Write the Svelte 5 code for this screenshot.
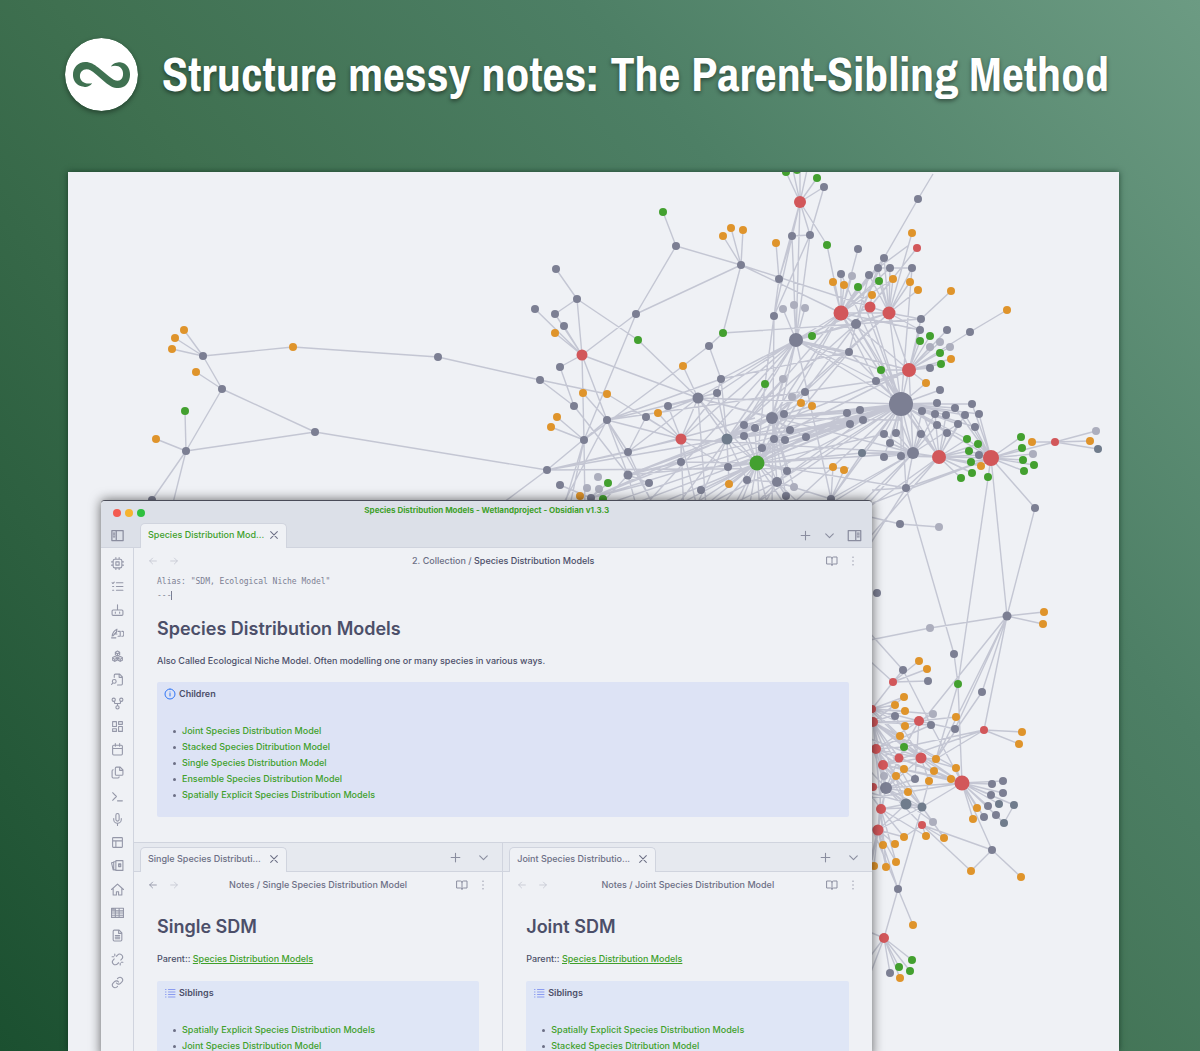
<script>
  const colors = {
    slate: '#7c7f93',
    teal: '#707c8c',
    grey: '#acaebd',
    orange: '#df942b',
    green: '#43a02f',
    red: '#d2575a'
  };

  // Graph nodes: x y [radius], grouped by colour.
  const nodeData = {
    grey: '783 309,794 305,805 308,852 276,930 347,940 342,950 347,598 477,587 488,599 489,783 379,792 397,794 487,1033 454,1096 431,939 527,930 628,933 714,884 776,933 822',
    slate:
      '203 356,222 389,186 451,315 432,438 357,152 500,824 187,741 265,792 236,810 235,779 279,774 316,796 340 7,858 249,841 274,869 275,878 268,884 258,890 268,912 268,856 324 5,918 199,921 319,920 330,947 330,970 332,930 368,676 246,556 269,577 299,535 309,555 314,564 326,636 314,560 367,540 380,574 406,698 398 5.5,709 346,668 406,646 417,607 420,584 440,628 452,547 470,560 485,591 498,628 475 4.5,649 483,681 462,701 490,721 379,717 393,849 352,876 381,805 392,772 418 6,784 414,744 425,755 428,744 436,774 439,785 440,790 430,806 437,762 448,728 467,747 480,777 482 5,787 471,786 496,831 499,847 413,860 410,850 424,863 420,884 434,896 433,890 443,884 457,901 456,906 488,901 404 12,913 453 6,940 390,937 403,955 408,972 404,979 414,922 411,935 414,946 415,965 415,958 424,975 427,937 425,921 434,947 433,979 455,1035 508,900 524,877 593,1007 616 4.5,954 654,982 692,903 670,928 681,895 716,931 725,955 729,915 779,886 788 6,992 784,1003 781,991 795,1003 793,988 806,984 817,996 815,992 850,898 889,890 973',
    teal: '727 439 5.5,862 453,1098 449,906 804 5.5,922 807 4.5,999 804,1014 805,1004 823',
    orange:
      '184 330,175 338,172 349,196 372,293 347,156 439,723 236,731 228,743 230,776 243,833 282,844 285,893 279,872 295,910 282,918 290,912 233,951 291,1007 310,951 359,555 333,583 393,607 394,683 366,658 413,557 417,551 427,580 496,801 403,812 406,729 484,833 467,844 470,926 383,981 466,1032 442,1090 441,1044 612,1043 624,919 661,927 669,904 697,895 705,905 711,905 726,900 736,956 717,1022 732,1019 744,936 759,934 771,904 769,956 768,896 776,929 781,951 779,908 792,977 808,973 819,904 837,926 836,944 838,883 845,895 844,896 862,886 867,874 866,971 871,1021 877,913 925,900 978',
    green:
      '185 411,786 172,797 170,817 178,827 245,723 333,812 336,858 287,879 281,930 336,920 341,940 353,941 364,881 370,663 212,638 340,765 384,757 463 7.5,608 483,603 499,967 439,978 444,969 451,971 462,961 478,972 473,988 477,1021 437,1022 448,1023 460,1034 465,1024 471,958 684,904 747,912 960,899 967,910 971',
    red: '800 202 6,841 313 7.5,870 307 5.5,889 313 6.5,917 248,909 370 7,582 355 5.5,681 439 5.5,939 457 7,991 458 8,1055 442,893 682,919 721 5,984 730,872 709,873 722 5,876 749 5,883 765 5,899 758 4.5,921 758 5.5,873 787,962 783 7.5,881 809 5,878 830 5.5,922 825,884 938 5'
  };

  // Links: every entry joins its first point to each of the others.
  const linkData = [
    '203 356,184 330,175 338,172 349,222 389,293 347',
    '222 389,196 372,186 451,315 432',
    '186 451,185 411,156 439,152 500,315 432,170 515',
    '438 357,293 347,540 380',
    '547 470,315 432,500 505,607 420,628 452,681 439,727 439,849 468',
    '540 380,574 406,607 394',
    '676 246,663 212,636 314,741 265',
    '741 265,723 236,731 228,743 230,636 314,723 333,841 313,889 313',
    '577 299,556 269,555 314,582 355,638 340',
    '582 355,535 309,555 314,564 326,555 333,560 367,636 314,584 440,607 420,698 398',
    '636 314,584 440',
    '574 406,560 367,540 380,628 475',
    '607 420,583 393,584 440,628 475,681 439,717 393,876 381,560 510,721 379,700 590',
    '584 440,557 417,551 427,585 510,560 520,569 510,683 366',
    '628 452,646 417,607 420,755 418,660 520',
    '628 475,649 483,600 505,727 439,640 520,757 463,681 462',
    '698 398,668 406,683 366,638 340,660 413,681 439,772 418,901 404,628 452,707 520,727 439,913 453',
    '681 439,658 413,668 406,646 417,607 394,681 462,717 393,727 467,700 520,684 520,913 453,796 340',
    '721 379,709 346,717 393,727 439,796 340,849 352',
    '709 346,723 333,683 366',
    '723 333,856 324',
    '800 202,786 172,793 170,800 170,807 170,817 178,824 187,792 236,810 235,827 245,779 279,774 316,796 340',
    '810 235,824 187,792 236,796 340,774 316',
    '792 236,796 340,779 279',
    '779 279,776 243,774 316,765 384',
    '774 316,765 384,772 510',
    '765 384,757 463,727 439',
    '827 245,841 313',
    '796 340,783 309,794 305,805 308,812 336,841 313,856 324,889 313,870 307,901 404,727 439,757 463,772 418,849 352,876 381,881 370,717 393,744 425,774 439,698 398,721 379,831 499,650 500,909 370',
    '841 313,858 249,841 274,852 276,833 282,844 285,858 287,869 275,878 268,884 258,890 268,893 279,879 281,901 404,889 313,812 336,856 324,772 418,744 425,757 463,909 370,876 381,920 330',
    '884 258,918 199,856 324',
    '918 199,933 174',
    '878 268,912 268,856 324,909 245',
    '870 307,872 295,893 279,917 248,901 404',
    '889 313,869 275,878 268,890 268,884 258,879 281,893 279,910 282,918 290,912 268,912 233,901 404,921 319,856 324,909 370,772 418,805 392,920 330',
    '856 324,869 275,849 352,921 319,901 404,727 439,805 392,939 457',
    '921 319,951 291,909 370',
    '970 332,1007 310,909 370',
    '909 370,920 330,920 341,930 336,947 330,930 347,940 342,950 347,940 353,951 359,941 364,930 368,901 404,876 381,881 370,926 383,744 436,790 430,913 453',
    '901 404,926 383,940 390,937 403,955 408,972 404,979 414,922 411,935 414,946 415,965 415,958 424,975 427,937 425,921 434,947 433,884 434,896 433,890 443,884 457,913 453,901 456,939 457,991 458,847 413,860 410,850 424,863 420,876 381,881 370,849 352,862 453,757 463,772 418,785 440,806 437,777 482,728 467,628 475,906 488,560 520,640 540,590 520,831 499,841 274,858 287,912 268,967 439,717 530,786 510,774 439',
    '913 453,884 434,896 433,890 443,884 457,901 456,862 453,921 434,937 425,906 488,939 457,922 411,935 414,757 463,844 520,820 510,845 530,881 370,958 424',
    '939 457,979 455,967 439,978 444,969 451,971 462,961 478,972 473,981 466,922 411,935 414,946 415,947 433,921 434,901 456,872 505,862 453,850 560,958 424,965 415,906 488',
    '991 458,967 439,978 444,969 451,971 462,979 455,981 466,988 477,1021 437,1022 448,1023 460,1034 465,1024 471,1033 454,972 404,979 414,965 415,975 427,955 408,1035 508,958 684,1007 616,1055 442,901 456,906 488,937 425,828 520',
    '1055 442,1032 442,1096 431,1090 441,1098 449',
    '1035 508,991 458,1007 616',
    '900 524,939 527,862 515',
    '906 488,954 654,860 560,872 490',
    '757 463,744 436,744 425,755 428,762 448,774 439,785 440,790 430,784 414,772 418,806 437,787 471,777 482,747 480,728 467,729 484,701 490,681 462,700 510,714 515,724 525,736 515,747 520,760 515,770 515,785 505,806 510,727 439,862 453,698 398,906 488,849 352,805 392,620 520,650 520,670 520,847 413,860 410,850 424,863 420,884 434',
    '772 418,784 414,744 425,755 428,783 379,805 392,774 439,785 440,790 430,806 437,801 403,812 406,777 482,787 471,762 448,847 413,860 410,900 420,727 439,786 496,628 475,794 487',
    '727 439,744 425,755 428,744 436,717 393,728 467,729 484,747 480,850 424,863 420,690 520,670 515,901 404,805 392,783 379',
    '777 482,787 471,786 496,831 499,747 480,762 448,740 520,794 487,755 520,700 520,862 420',
    '831 499,833 467,844 470,901 404,862 453,913 453',
    '591 498,608 483,599 489,560 485,649 483,681 462,900 404,772 418',
    '1007 616,1044 612,1043 624,930 628,982 692,984 730,925 718,955 729,936 759',
    '930 628,860 642',
    '954 654,958 684',
    '958 684,962 783,936 759',
    '982 692,936 759',
    '903 670,860 622,893 682,931 725',
    '893 682,919 661,927 669,928 681,872 709,860 652',
    '872 709,893 682,895 716,904 697,895 705,905 711,905 726,900 736,919 721,933 714',
    '919 721,956 717,955 729,904 747,873 722,876 749,899 758,933 714,915 779',
    '984 730,1022 732,1019 744,904 747,936 759,883 765',
    '873 722,904 697,905 711,895 705,931 725,904 747,899 758,883 765,921 758,936 759,956 768,886 788,906 804,900 736,962 783,922 807',
    '876 749,904 747,899 758,921 758,904 769,896 776,934 771,886 788,922 807,915 779,962 783,881 809,931 725,951 779',
    '883 765,899 758,921 758,896 776,904 769,886 788,908 792,906 804,878 830,951 779,962 783',
    '921 758,936 759,934 771,929 781,956 768,904 747,873 722,886 788,962 783,860 700,860 735,895 716',
    '886 788,896 776,904 769,915 779,908 792,906 804,881 809,873 787,962 783,922 807,860 710,860 760,899 758,904 747,933 822,878 830,922 825',
    '962 783,992 784,1003 781,991 795,1003 793,988 806,999 804,1014 805,984 817,996 815,1004 823,977 808,973 819,992 850,958 684,956 768,951 779,922 807,931 725,934 771,860 800',
    '1014 805,1004 823',
    '922 807,908 792,929 781,906 804,898 889,878 830,860 790,886 788,933 822,944 838',
    '881 809,873 722,906 804,922 807,904 837,926 836,883 845,886 867,896 862,860 780,876 749',
    '878 830,883 845,895 844,904 837,886 867,896 862,874 866,898 889,906 804,860 900,881 809,872 860',
    '922 825,904 837,926 836,944 838,992 850,971 871,886 788',
    '992 850,971 871,1021 877',
    '898 889,913 925,884 938,860 800',
    '884 938,912 960,899 967,910 971,890 973,900 978,860 928,860 970,866 985'
  ];

  const points = (s) => s.split(',').map((p) => p.split(' ').map(Number));

  const nodes = Object.entries(nodeData).flatMap(([kind, s]) =>
    points(s).map(([x, y, r = 4]) => ({ x, y, r, fill: colors[kind] }))
  );
  const links = linkData
    .map((s) => {
      const [hub, ...ends] = points(s);
      return ends.map((e) => `M${hub[0]} ${hub[1]}L${e[0]} ${e[1]}`).join('');
    })
    .join('');

  // 24-unit outline icons.
  const icon = {
    panelLeft: 'M3 4h18v16H3zM10 4v16M5.500 8h2M5.500 11h2M5.500 14h2',
    panelRight: 'M2 4h20v16H2zM14 4v16M16.500 8h3M16.500 11h3M16.500 14h3',
    plus: 'M12 4v16M4 12h16',
    down: 'M5 9l7 7 7-7',
    close: 'M4 4l16 16M20 4L4 20',
    back: 'M20 12H4M11 5l-7 7 7 7',
    forward: 'M4 12h16M13 5l7 7-7 7',
    book: 'M12 6v14M2 4h7a3 3 0 0 1 3 3 3 3 0 0 1 3-3h7v14h-7a3 3 0 0 0-3 3 3 3 0 0 0-3-3H2z',
    dots: 'M12 4v1M12 11.500v1M12 19v1',
    info: 'M12 2a10 10 0 1 0 0 20 10 10 0 1 0 0-20M12 16v-5M12 8v.1',
    list: 'M9 5h13M9 10h13M9 15h13M9 20h13M3 5h1M3 10h1M3 15h1M3 20h1'
  };

  const ribbon = [
    { name: 'Processor', d: 'M7 4h10a3 3 0 0 1 3 3v10a3 3 0 0 1-3 3H7a3 3 0 0 1-3-3V7a3 3 0 0 1 3-3zM9 9h6v6H9zM9 1v3M15 1v3M9 20v3M15 20v3M1 9h3M1 15h3M20 9h3M20 15h3' },
    { name: 'Task list', d: 'M10 5h12M10 12h12M10 19h12M2 5l1.500 1.500L6 4M3 12h2M3 19h2' },
    { name: 'Assistant', d: 'M4 11h16a2 2 0 0 1 2 2v6a2 2 0 0 1-2 2H4a2 2 0 0 1-2-2v-6a2 2 0 0 1 2-2zM12 11V4M12 1.500v3M8 15v2M16 15v2' },
    { name: 'Handwriting', d: 'M1 20h8M2 17C3 10 6 6 11 4l-1 6-6 6M4 16l5-6M13 8h4v9h-4M20 8h2c2 0 2 9 0 9h-2M6 13h5' },
    { name: 'Blocks', d: 'M12 2l4 2v5l-4 2-4-2V4zM7 12l4 2v5l-4 2-4-2v-5zM17 12l4 2v5l-4 2-4-2v-5zM8 5l4 2 4-2M12 7v4M3 15l4 2 4-2M7 17v4M13 15l4 2 4-2M17 17v4' },
    { name: 'File search', d: 'M6 8V4a2 2 0 0 1 2-2h8l5 5v13a2 2 0 0 1-2 2h-7M15 2v6h6M6 12a3.500 3.500 0 1 0 0 7 3.500 3.500 0 1 0 0-7M3 19l-2 2' },
    { name: 'Graph', d: 'M5 2a3 3 0 1 0 0 6 3 3 0 1 0 0-6M19 2a3 3 0 1 0 0 6 3 3 0 1 0 0-6M12 16a3 3 0 1 0 0 6 3 3 0 1 0 0-6M6 8l1 4h10l1-4M12 12v4' },
    { name: 'Canvas', d: 'M3 3h7v9H3zM14 3h7v5h-7zM14 12h7v9h-7zM3 16h7v5H3z' },
    { name: 'Calendar', d: 'M5 4h14a2 2 0 0 1 2 2v14a2 2 0 0 1-2 2H5a2 2 0 0 1-2-2V6a2 2 0 0 1 2-2zM3 10h18M8 1v5M16 1v5' },
    { name: 'Copies', d: 'M10 2h7l5 5v8a2 2 0 0 1-2 2H10a2 2 0 0 1-2-2V4a2 2 0 0 1 2-2zM16 2v6h6M4 7a2 2 0 0 0-2 2v11a2 2 0 0 0 2 2h9a2 2 0 0 0 2-2' },
    { name: 'Terminal', d: 'M3 5l7 7-7 7M12 20h9' },
    { name: 'Record', d: 'M12 1a3 3 0 0 1 3 3v8a3 3 0 0 1-6 0V4a3 3 0 0 1 3-3zM5 10v2a7 7 0 0 0 14 0v-2M12 19v4' },
    { name: 'Layout', d: 'M4 3h16a1 1 0 0 1 1 1v16a1 1 0 0 1-1 1H4a1 1 0 0 1-1-1V4a1 1 0 0 1 1-1zM3 9h18M9 9v12' },
    { name: 'Cards', d: 'M9 3h13v18H9zM9 5H5v15h4M5 6L1 7l3 13M14 9h4v5h-4zM15 11h2' },
    { name: 'Home', d: 'M1 12L12 2l11 10M4 10v12h6v-6h4v6h6V10' },
    { name: 'Table', d: 'M1 4h22v17H1zM1 9h22M1 13h22M1 17h22M8 4v17M15 4v17M2 6h4' },
    { name: 'Document', d: 'M6 2h9l5 5v13a2 2 0 0 1-2 2H6a2 2 0 0 1-2-2V4a2 2 0 0 1 2-2zM14 2v6h6M8 12h8M8 15h8M8 18h8' },
    { name: 'Unlink', d: 'M10 6l2-2a5 5 0 0 1 8 7l-2 2M14 18l-2 2a5 5 0 0 1-8-7l2-2M7 2v3M2 7h3M17 19v3M19 17h3' },
    { name: 'Link', d: 'M10 13a5 5 0 0 0 7.500.500l3-3a5 5 0 0 0-7-7L12 5M14 11a5 5 0 0 0-7.500-.500l-3 3a5 5 0 0 0 7 7L12 19' }
  ];

  const children = [
    'Joint Species Distribution Model',
    'Stacked Species Ditribution Model',
    'Single Species Distribution Model',
    'Ensemble Species Distribution Model',
    'Spatially Explicit Species Distribution Models'
  ];

  const notes = [
    {
      tab: 'Single Species Distributi...',
      path: 'Notes / Single Species Distribution Model',
      title: 'Single SDM',
      canGoBack: true,
      siblings: ['Spatially Explicit Species Distribution Models', 'Joint Species Distribution Model']
    },
    {
      tab: 'Joint Species Distributio...',
      path: 'Notes / Joint Species Distribution Model',
      title: 'Joint SDM',
      canGoBack: false,
      siblings: ['Spatially Explicit Species Distribution Models', 'Stacked Species Ditribution Model']
    }
  ];
</script>

{#snippet glyph(d)}
  <svg class="glyph" viewBox="0 0 24 24" aria-hidden="true"><path {d} /></svg>
{/snippet}

{#snippet tab(label)}
  <div class="tab">
    <button class="tab-name">{label}</button>
    <button class="tab-close" aria-label="Close tab">{@render glyph(icon.close)}</button>
  </div>
{/snippet}

{#snippet viewTools(canGoBack)}
  <div class="nav">
    <button class:dim={!canGoBack} aria-label="Back">{@render glyph(icon.back)}</button>
    <button class="dim" aria-label="Forward">{@render glyph(icon.forward)}</button>
  </div>
{/snippet}

{#snippet viewActions()}
  <div class="nav actions">
    <button aria-label="Reading view">{@render glyph(icon.book)}</button>
    <button aria-label="More options">{@render glyph(icon.dots)}</button>
  </div>
{/snippet}

{#snippet linkList(items)}
  <ul class="links">
    {#each items as item}
      <li><a href="#note">{item}</a></li>
    {/each}
  </ul>
{/snippet}

<main class="page">
  <header class="hero">
    <svg class="logo" viewBox="75 51 220 220" aria-hidden="true">
      <circle cx="185" cy="161" r="110" fill="#fff" />
      <path
        fill="#3f7151"
        d="M213 137C222 126 231 124 241 124C260 126 271 142 271 161C271 185 256 202 236 202C220 202 208 194 196 184L168 160C156 150 149 145 140 145C128 145 120 154 120 166C120 180 134 192 157 187C150 196 140 200 132 198C110 196 99 180 99 162C99 140 114 123 136 123C152 123 163 130 175 140L208 167C218 175 226 180 234 180C244 180 250 171 250 159C250 142 236 130 213 137Z"
      />
    </svg>
    <h1>Structure messy notes: The Parent-Sibling Method</h1>
  </header>

  <section class="board">
    <svg class="graph" viewBox="68 172 1051 879" aria-hidden="true">
      <path class="edges" d={links} />
      {#each nodes as n}
        <circle cx={n.x} cy={n.y} r={n.r} fill={n.fill} />
      {/each}
    </svg>

    <div class="window">
      <div class="chrome">
        <div class="titlebar">
          <div class="lights"><i class="stop"></i><i class="min"></i><i class="max"></i></div>
          <span>Species Distribution Models - Wetlandproject - Obsidian v1.3.3</span>
        </div>
        <div class="tabbar">
          <button class="corner" aria-label="Toggle left sidebar">{@render glyph(icon.panelLeft)}</button>
          {@render tab('Species Distribution Mod...')}
          <div class="tab-tools">
            <button aria-label="New tab">{@render glyph(icon.plus)}</button>
            <button aria-label="Tab list">{@render glyph(icon.down)}</button>
            <button aria-label="Toggle right sidebar">{@render glyph(icon.panelRight)}</button>
          </div>
        </div>
      </div>

      <div class="body">
        <nav class="ribbon">
          {#each ribbon as r}
            <button aria-label={r.name}>{@render glyph(r.d)}</button>
          {/each}
        </nav>

        <div class="workspace">
          <article class="top-pane">
            <div class="view-head">
              {@render viewTools(false)}
              <p>2. Collection / <b>Species Distribution Models</b></p>
              {@render viewActions()}
            </div>
            <div class="note">
              <pre class="meta">Alias: "SDM, Ecological Niche Model"
<span class="caret">---</span></pre>
              <h2>Species Distribution Models</h2>
              <p class="text">Also Called Ecological Niche Model. Often modelling one or many species in various ways.</p>
              <div class="callout">
                <h3 class="info">{@render glyph(icon.info)}Children</h3>
                {@render linkList(children)}
              </div>
            </div>
          </article>

          <div class="split">
            {#each notes as note}
              <article class="pane">
                <div class="tabbar">
                  {@render tab(note.tab)}
                  <div class="tab-tools">
                    <button aria-label="New tab">{@render glyph(icon.plus)}</button>
                    <button aria-label="Tab list">{@render glyph(icon.down)}</button>
                  </div>
                </div>
                <div class="view-head">
                  {@render viewTools(note.canGoBack)}
                  <p>{note.path}</p>
                  {@render viewActions()}
                </div>
                <div class="note">
                  <h2>{note.title}</h2>
                  <p class="text">Parent:: <a href="#parent">Species Distribution Models</a></p>
                  <div class="callout">
                    <h3>{@render glyph(icon.list)}Siblings</h3>
                    {@render linkList(note.siblings)}
                  </div>
                </div>
              </article>
            {/each}
          </div>
        </div>
      </div>
    </div>
  </section>
</main>

<style>
  :global(body) {
    margin: 0;
  }

  .page {
    box-sizing: border-box;
    display: flex;
    flex-direction: column;
    height: 100vh;
    overflow: hidden;
    padding: 0 81px 0 68px;
    background: linear-gradient(50deg, #1b5030 0%, #3f7050 45%, #4d7f65 70%, #6c9b83 100%);
    font-family: Inter, 'Liberation Sans', sans-serif;
    color: #4c4f69;
  }

  h1,
  h2,
  h3,
  p,
  pre,
  ul {
    margin: 0;
    padding: 0;
  }

  button {
    display: flex;
    align-items: center;
    margin: 0;
    padding: 0;
    border: 0;
    background: none;
    color: inherit;
    font: inherit;
  }

  .glyph {
    display: block;
    width: 12px;
    height: 12px;
    fill: none;
    stroke: currentColor;
    stroke-width: 2;
    stroke-linecap: round;
    stroke-linejoin: round;
  }

  .hero {
    flex: none;
    display: flex;
    align-items: center;
    gap: 24px;
    height: 148px;
    padding-bottom: 24px;
    margin-left: -3px;
    color: #fff;
  }

  .logo {
    flex: none;
    width: 73px;
    height: 73px;
    border-radius: 50%;
    box-shadow: 0 2px 5px rgb(0 0 0 / 40%);
  }

  h1 {
    font: bold 48px/56px 'Archivo Narrow', 'Liberation Sans Narrow', 'Roboto Condensed', 'Liberation Sans', sans-serif;
    white-space: nowrap;
    text-shadow: 0 2px 4px rgb(0 0 0 / 45%);
  }

  .board {
    position: relative;
    flex: 1;
    min-height: 0;
    background: #eff1f5;
    box-shadow: 0 0 6px rgb(10 40 25 / 70%);
  }

  .graph {
    position: absolute;
    top: 0;
    left: 0;
    width: 100%;
  }

  .edges {
    fill: none;
    stroke: #a6aabc;
    stroke-opacity: 0.6;
    stroke-width: 1.4;
  }

  .window {
    position: relative;
    width: 73.4%;
    margin: 328px 0 0 33px;
    border-top: 1px solid #4a4c58;
    border-radius: 4px 4px 0 0;
    background: #eff1f5;
    box-shadow: 0 0 12px rgb(0 0 0 / 60%);
    font-size: 9px;
    font-weight: 500;
    line-height: 16px;
  }

  .chrome {
    border-bottom: 1px solid #d0d4de;
    border-radius: 4px 4px 0 0;
    background: #dce0e8;
  }

  .titlebar {
    position: relative;
    display: flex;
    justify-content: center;
    height: 22px;
    font-size: 8px;
    line-height: 18px;
    font-weight: 700;
    color: #40a02b;
  }

  .lights {
    position: absolute;
    left: 12px;
    top: 8px;
    display: flex;
    gap: 4px;
  }

  .lights i {
    width: 8px;
    height: 8px;
    border-radius: 50%;
  }

  .stop {
    background: #f35b50;
  }

  .min {
    background: #f6b32e;
  }

  .max {
    background: #2fc03f;
  }

  .tabbar {
    display: flex;
    align-items: flex-end;
    height: 24px;
  }

  .corner {
    align-self: center;
    width: 39px;
    padding-left: 9px;
    box-sizing: border-box;
    color: #8a8d9f;
  }

  .tab {
    display: flex;
    align-items: center;
    justify-content: space-between;
    box-sizing: border-box;
    width: 147px;
    height: 25px;
    margin-bottom: -1px;
    padding: 0 7px 2px;
    border: 1px solid #d0d4de;
    border-bottom: 0;
    border-radius: 5px 5px 0 0;
    background: #eff1f5;
    color: #6c6f85;
    white-space: nowrap;
  }

  .chrome .tab-name {
    color: #40a02b;
  }

  .tab-close .glyph {
    width: 10px;
    height: 10px;
    stroke-width: 2.5;
  }

  .tab-tools {
    display: flex;
    align-self: center;
    gap: 11px;
    margin-left: auto;
    padding-right: 10px;
    color: #8a8d9f;
  }

  .tab-tools .glyph {
    width: 13px;
    height: 13px;
  }

  .corner .glyph,
  .tab-tools button:nth-child(3) .glyph {
    width: 15px;
    height: 15px;
  }

  .body {
    display: grid;
    grid-template-columns: 32px 1fr;
  }

  .ribbon {
    display: flex;
    flex-direction: column;
    align-items: center;
    justify-content: space-between;
    height: 432px;
    padding-top: 9px;
    color: #9497a8;
  }

  .ribbon .glyph {
    width: 13px;
    height: 13px;
  }

  .workspace {
    min-width: 0;
    border-left: 1px solid #d0d4de;
  }

  .view-head {
    display: grid;
    grid-template-columns: 60px 1fr 60px;
    align-items: center;
    height: 26px;
    color: #6c6f85;
    text-align: center;
  }

  .view-head b {
    font-weight: 500;
    color: #4c4f69;
  }

  .nav {
    display: flex;
    gap: 11px;
    padding-left: 14px;
    color: #8c8fa1;
  }

  .nav .glyph {
    width: 10px;
    height: 10px;
  }

  .nav .dim {
    color: #c4c7d1;
  }

  .actions {
    justify-content: flex-end;
    gap: 9px;
    padding: 0 13px 0 0;
  }

  .actions .glyph {
    width: 12px;
    height: 12px;
  }

  .note {
    padding: 0 23px;
  }

  .meta {
    padding-top: 1px;
    font: 8px/14px 'DejaVu Sans Mono', 'Liberation Mono', monospace;
    color: #7c7f93;
  }

  .caret {
    border-right: 1px solid #7c7f93;
  }

  h2 {
    font-size: 18px;
    line-height: 24px;
    font-weight: 600;
  }

  .top-pane {
    box-sizing: border-box;
    height: 294px;
  }

  .top-pane h2 {
    margin: 14px 0 12px;
  }

  .top-pane .text {
    margin-bottom: 13px;
  }

  .top-pane .callout {
    padding-bottom: 14px;
  }

  .callout {
    padding: 4px 7px;
    border-radius: 2px;
    background: #dde3f5;
  }

  h3 {
    display: flex;
    align-items: center;
    gap: 3px;
    font-size: 9px;
    line-height: 16px;
    font-weight: 600;
  }

  h3 .glyph {
    color: #8a9bf0;
    width: 12px;
    height: 12px;
  }

  .info .glyph {
    color: #2f75f5;
  }

  .links {
    margin-top: 21px;
    padding-left: 18px;
    list-style: none;
  }

  .links li {
    position: relative;
    height: 16px;
  }

  .links li::before {
    content: '';
    position: absolute;
    left: -9px;
    top: 7px;
    width: 3px;
    height: 3px;
    border-radius: 50%;
    background: #6c6f85;
  }

  a {
    color: #40a02b;
  }

  .links a {
    text-decoration: none;
  }

  .split {
    display: grid;
    grid-template-columns: 1fr 1fr;
    border-top: 1px solid #d0d4de;
  }

  .pane:first-child {
    border-right: 1px solid #d0d4de;
  }

  .pane .tabbar {
    height: 28px;
    padding-left: 6px;
    border-bottom: 1px solid #d0d4de;
    background: #e6e9ef;
  }

  .pane .tab-tools {
    gap: 15px;
    padding-right: 12px;
  }

  .pane h2 {
    margin: 17px 0 12px;
  }

  .pane .text {
    margin-bottom: 14px;
  }

  .pane .callout {
    background: #dfe6f6;
  }
</style>
